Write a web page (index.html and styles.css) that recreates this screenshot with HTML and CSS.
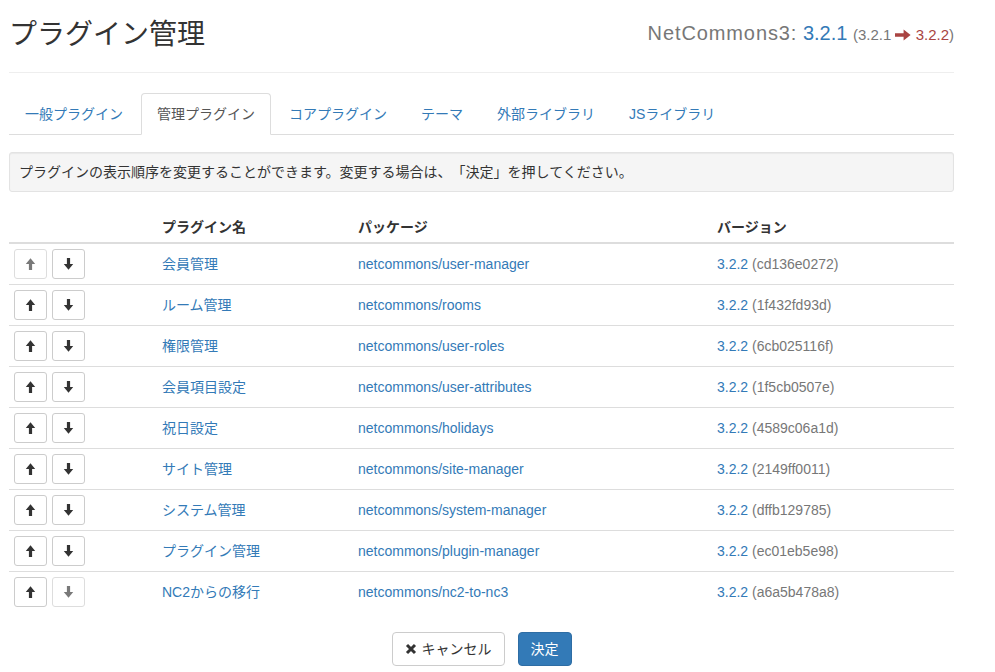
FILE: index.html
```html
<!DOCTYPE html>
<html lang="ja">
<head>
<meta charset="utf-8">
<title>プラグイン管理</title>
<link rel="stylesheet" href="styles.css">
</head>
<body>
<div class="page">
  <header class="page-header">
    <h1 class="title">プラグイン管理</h1>
    <div class="version"><span class="label">NetCommons3:</span> <a class="cur" href="#">3.2.1</a> <small class="upd">(3.2.1 <svg class="arrow-right" viewBox="0 0 16 12" width="16" height="12"><path d="M0 4.2 H8.6 V0.4 L15.6 6 L8.6 11.6 V7.8 H0 Z"/></svg> <span class="danger">3.2.2</span>)</small></div>
  </header>

  <ul class="tabs">
    <li><a href="#">一般プラグイン</a></li>
    <li class="active"><a href="#">管理プラグイン</a></li>
    <li><a href="#">コアプラグイン</a></li>
    <li><a href="#">テーマ</a></li>
    <li><a href="#">外部ライブラリ</a></li>
    <li><a href="#">JSライブラリ</a></li>
  </ul>

  <div class="well">プラグインの表示順序を変更することができます。変更する場合は、「決定」を押してください。</div>

  <table class="plugins">
    <thead>
      <tr>
        <th class="c-btn"></th>
        <th class="c-name">プラグイン名</th>
        <th class="c-pkg">パッケージ</th>
        <th class="c-ver">バージョン</th>
      </tr>
    </thead>
    <tbody>
      <tr>
        <td class="c-btn"><span class="btn-sm disabled"><svg viewBox="0 0 11 12" width="11" height="12"><path d="M5.5 0.3 L10.2 6 H7.1 V12 H3.9 V6 H0.8 Z"/></svg></span><span class="btn-sm"><svg viewBox="0 0 11 12" width="11" height="12"><path d="M5.5 11.7 L10.2 6 H7.1 V0 H3.9 V6 H0.8 Z"/></svg></span></td>
        <td><a href="#">会員管理</a></td>
        <td><a href="#">netcommons/user-manager</a></td>
        <td><a href="#">3.2.2</a> <span class="hash">(cd136e0272)</span></td>
      </tr>
      <tr>
        <td class="c-btn"><span class="btn-sm"><svg viewBox="0 0 11 12" width="11" height="12"><path d="M5.5 0.3 L10.2 6 H7.1 V12 H3.9 V6 H0.8 Z"/></svg></span><span class="btn-sm"><svg viewBox="0 0 11 12" width="11" height="12"><path d="M5.5 11.7 L10.2 6 H7.1 V0 H3.9 V6 H0.8 Z"/></svg></span></td>
        <td><a href="#">ルーム管理</a></td>
        <td><a href="#">netcommons/rooms</a></td>
        <td><a href="#">3.2.2</a> <span class="hash">(1f432fd93d)</span></td>
      </tr>
      <tr>
        <td class="c-btn"><span class="btn-sm"><svg viewBox="0 0 11 12" width="11" height="12"><path d="M5.5 0.3 L10.2 6 H7.1 V12 H3.9 V6 H0.8 Z"/></svg></span><span class="btn-sm"><svg viewBox="0 0 11 12" width="11" height="12"><path d="M5.5 11.7 L10.2 6 H7.1 V0 H3.9 V6 H0.8 Z"/></svg></span></td>
        <td><a href="#">権限管理</a></td>
        <td><a href="#">netcommons/user-roles</a></td>
        <td><a href="#">3.2.2</a> <span class="hash">(6cb025116f)</span></td>
      </tr>
      <tr>
        <td class="c-btn"><span class="btn-sm"><svg viewBox="0 0 11 12" width="11" height="12"><path d="M5.5 0.3 L10.2 6 H7.1 V12 H3.9 V6 H0.8 Z"/></svg></span><span class="btn-sm"><svg viewBox="0 0 11 12" width="11" height="12"><path d="M5.5 11.7 L10.2 6 H7.1 V0 H3.9 V6 H0.8 Z"/></svg></span></td>
        <td><a href="#">会員項目設定</a></td>
        <td><a href="#">netcommons/user-attributes</a></td>
        <td><a href="#">3.2.2</a> <span class="hash">(1f5cb0507e)</span></td>
      </tr>
      <tr>
        <td class="c-btn"><span class="btn-sm"><svg viewBox="0 0 11 12" width="11" height="12"><path d="M5.5 0.3 L10.2 6 H7.1 V12 H3.9 V6 H0.8 Z"/></svg></span><span class="btn-sm"><svg viewBox="0 0 11 12" width="11" height="12"><path d="M5.5 11.7 L10.2 6 H7.1 V0 H3.9 V6 H0.8 Z"/></svg></span></td>
        <td><a href="#">祝日設定</a></td>
        <td><a href="#">netcommons/holidays</a></td>
        <td><a href="#">3.2.2</a> <span class="hash">(4589c06a1d)</span></td>
      </tr>
      <tr>
        <td class="c-btn"><span class="btn-sm"><svg viewBox="0 0 11 12" width="11" height="12"><path d="M5.5 0.3 L10.2 6 H7.1 V12 H3.9 V6 H0.8 Z"/></svg></span><span class="btn-sm"><svg viewBox="0 0 11 12" width="11" height="12"><path d="M5.5 11.7 L10.2 6 H7.1 V0 H3.9 V6 H0.8 Z"/></svg></span></td>
        <td><a href="#">サイト管理</a></td>
        <td><a href="#">netcommons/site-manager</a></td>
        <td><a href="#">3.2.2</a> <span class="hash">(2149ff0011)</span></td>
      </tr>
      <tr>
        <td class="c-btn"><span class="btn-sm"><svg viewBox="0 0 11 12" width="11" height="12"><path d="M5.5 0.3 L10.2 6 H7.1 V12 H3.9 V6 H0.8 Z"/></svg></span><span class="btn-sm"><svg viewBox="0 0 11 12" width="11" height="12"><path d="M5.5 11.7 L10.2 6 H7.1 V0 H3.9 V6 H0.8 Z"/></svg></span></td>
        <td><a href="#">システム管理</a></td>
        <td><a href="#">netcommons/system-manager</a></td>
        <td><a href="#">3.2.2</a> <span class="hash">(dffb129785)</span></td>
      </tr>
      <tr>
        <td class="c-btn"><span class="btn-sm"><svg viewBox="0 0 11 12" width="11" height="12"><path d="M5.5 0.3 L10.2 6 H7.1 V12 H3.9 V6 H0.8 Z"/></svg></span><span class="btn-sm"><svg viewBox="0 0 11 12" width="11" height="12"><path d="M5.5 11.7 L10.2 6 H7.1 V0 H3.9 V6 H0.8 Z"/></svg></span></td>
        <td><a href="#">プラグイン管理</a></td>
        <td><a href="#">netcommons/plugin-manager</a></td>
        <td><a href="#">3.2.2</a> <span class="hash">(ec01eb5e98)</span></td>
      </tr>
      <tr>
        <td class="c-btn"><span class="btn-sm"><svg viewBox="0 0 11 12" width="11" height="12"><path d="M5.5 0.3 L10.2 6 H7.1 V12 H3.9 V6 H0.8 Z"/></svg></span><span class="btn-sm disabled"><svg viewBox="0 0 11 12" width="11" height="12"><path d="M5.5 11.7 L10.2 6 H7.1 V0 H3.9 V6 H0.8 Z"/></svg></span></td>
        <td><a href="#">NC2からの移行</a></td>
        <td><a href="#">netcommons/nc2-to-nc3</a></td>
        <td><a href="#">3.2.2</a> <span class="hash">(a6a5b478a8)</span></td>
      </tr>
    </tbody>
  </table>

  <div class="actions">
    <button class="btn btn-default" type="button"><svg class="x-icon" viewBox="0 0 12 12" width="12" height="12"><path d="M2 2 L10 10 M10 2 L2 10"/></svg>キャンセル</button>
    <button class="btn btn-primary" type="button">決定</button>
  </div>
</div>
</body>
</html>
```

FILE: styles.css
```css
html, body {
  margin: 0;
  padding: 0;
  background: #fff;
}

body {
  font-family: "Liberation Sans", Arial, "Noto Sans CJK JP", sans-serif;
  font-size: 14px;
  line-height: 20px;
  color: #333;
  text-spacing-trim: space-all;
}

a {
  color: #337ab7;
  text-decoration: none;
}

.page {
  width: 945px;
  margin-left: 9px;
}

/* header */
.page-header {
  display: flex;
  justify-content: space-between;
  align-items: flex-start;
  padding: 17px 0 20px;
  border-bottom: 1px solid #eee;
  height: 35px;
}

.title {
  margin: 0;
  font-size: 28px;
  line-height: 35px;
  font-weight: 400;
  color: #333;
}

.version {
  margin-top: 2px;
  font-size: 20px;
  line-height: 28px;
  color: #777;
  white-space: nowrap;
}

.version .label {
  letter-spacing: 0.9px;
}

.version .cur {
  color: #337ab7;
}

.upd {
  font-size: 15px;
  color: #777;
}

.arrow-right {
  fill: #a94442;
  vertical-align: -1px;
}

.danger {
  color: #a94442;
}

/* tabs */
.tabs {
  list-style: none;
  margin: 20px 0 0;
  padding: 0;
  display: flex;
  border-bottom: 1px solid #ddd;
}

.tabs li {
  margin: 0 2px -1px 0;
}

.tabs a {
  display: block;
  padding: 10px 15px;
  line-height: 20px;
  border: 1px solid transparent;
  border-radius: 4px 4px 0 0;
  color: #337ab7;
}

.tabs .active a {
  color: #555;
  background: #fff;
  border-color: #ddd #ddd transparent;
}

/* well */
.well {
  margin-top: 17px;
  margin-bottom: 20px;
  padding: 9px;
  background: #f5f5f5;
  border: 1px solid #e3e3e3;
  border-radius: 3px;
  box-shadow: inset 0 1px 1px rgba(0, 0, 0, .05);
}

/* table */
.plugins {
  width: 945px;
  border-collapse: collapse;
  border-spacing: 0;
  margin-bottom: 20px;
  table-layout: fixed;
}

.plugins th,
.plugins td {
  padding: 5px;
  line-height: 20px;
  text-align: left;
  vertical-align: middle;
}

.plugins th {
  font-weight: 700;
  border-bottom: 2px solid #ddd;
}

.plugins td {
  border-top: 1px solid #ddd;
}

.plugins tbody tr:first-child td {
  border-top: 0;
}

.c-btn { width: 138px; }
.c-name { width: 186px; }
.c-pkg { width: 349px; }
.c-ver { width: auto; }

.c-btn {
  white-space: nowrap;
}

.btn-sm {
  display: inline-flex;
  align-items: center;
  justify-content: center;
  box-sizing: border-box;
  width: 33px;
  height: 30px;
  margin-right: 5px;
  background: #fff;
  border: 1px solid #ccc;
  border-radius: 3px;
  vertical-align: middle;
}

.btn-sm svg {
  display: block;
  fill: #333;
}

.btn-sm.disabled {
  opacity: .65;
}

.hash {
  color: #777;
}

/* actions */
.actions {
  display: flex;
  justify-content: center;
  gap: 13px;
}

.btn {
  display: inline-flex;
  align-items: center;
  box-sizing: border-box;
  height: 34px;
  padding: 6px 12px;
  font-family: inherit;
  font-size: 14px;
  line-height: 20px;
  border: 1px solid transparent;
  border-radius: 4px;
  cursor: pointer;
}

.btn-default {
  color: #333;
  background: #fff;
  border-color: #ccc;
}

.btn-primary {
  color: #fff;
  background: #337ab7;
  border-color: #2e6da4;
}

.x-icon {
  margin-right: 5px;
  stroke: #333;
  stroke-width: 3;
  fill: none;
}
```
